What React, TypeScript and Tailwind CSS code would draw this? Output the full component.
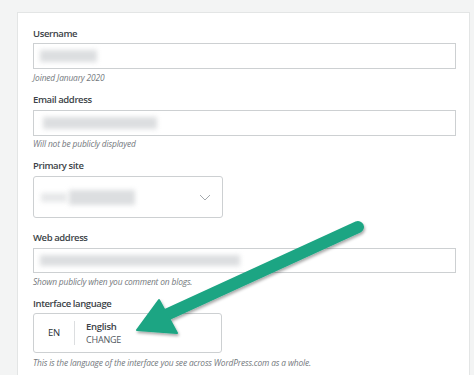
import React from "react"

const font = { fontFamily: '"Open Sans", "Noto Sans", Arial, sans-serif' }

function Label({ children, className = "" }: { children: React.ReactNode; className?: string }) {
  return <div className={`text-[9.5px] leading-[14px] font-semibold tracking-[-0.4px] text-[#3c4348] ${className}`}>{children}</div>
}

function Help({ children, className = "" }: { children: React.ReactNode; className?: string }) {
  return <div className={`text-[8.4px] leading-[12px] italic tracking-[-0.15px] text-[#73787d] ${className}`}>{children}</div>
}

function Blur({ className }: { className: string }) {
  return <div className={`bg-[#dcdee0] blur-[2.5px] ${className}`} />
}

function Arrow() {
  return (
    <svg className="absolute left-0 top-0 pointer-events-none" width="474" height="375" viewBox="0 0 474 375">
      <defs>
        <filter id="sh" x="-20%" y="-20%" width="140%" height="140%">
          <feDropShadow dx="1" dy="2" stdDeviation="1.5" floodColor="#000" floodOpacity="0.35" />
        </filter>
      </defs>
      <g filter="url(#sh)" fill="#1ba583" stroke="#1ba583">
        <line x1="358" y1="227" x2="166" y2="315" strokeWidth="12" strokeLinecap="round" />
        <polygon points="137,330 159,300 177,333" strokeWidth="2" strokeLinejoin="round" />
      </g>
    </svg>
  )
}

export default function App() {
  return (
    <div className="relative w-[474px] h-[375px] overflow-hidden bg-[#f3f4f4] pt-[12px] pl-[17px] pr-[4px]" style={font}>
      <div className="bg-white border border-[#e3e5e5] h-[400px] pl-[15px] pr-[13px] pt-[14px]">
        <Label>Username</Label>
        <div className="mt-[2px] h-[26px] border border-[#cdd0d2] flex items-center pl-[6px]">
          <Blur className="w-[57px] h-[12px]" />
        </div>
        <Help className="mt-[3px]">Joined January 2020</Help>

        <Label className="mt-[9px]">Email address</Label>
        <div className="mt-[3px] h-[26px] border border-[#cdd0d2] flex items-center pl-[9px]">
          <Blur className="w-[114px] h-[12px]" />
        </div>
        <Help className="mt-[2px]">Will not be publicly displayed</Help>

        <Label className="mt-[9px]">Primary site</Label>
        <div className="mt-[3px] w-[190px] h-[42px] border border-[#cdd0d2] rounded-[3px] flex items-center justify-between pl-[7px] pr-[11px]">
          <div className="flex items-center gap-[2px]">
            <Blur className="w-[26px] h-[9px] opacity-70" />
            <Blur className="w-[66px] h-[15px]" />
          </div>
          <svg width="12" height="7" viewBox="0 0 12 7" fill="none" stroke="#a4a9ad" strokeWidth="1">
            <path d="M1 1l5 5 5-5" />
          </svg>
        </div>

        <Label className="mt-[13px]">Web address</Label>
        <div className="mt-[3px] h-[25px] border border-[#cdd0d2] flex items-center pl-[6px]">
          <Blur className="w-[200px] h-[11px]" />
        </div>
        <Help className="mt-[3px]">Shown publicly when you comment on blogs.</Help>

        <Label className="mt-[9px]">Interface language</Label>
        <div className="mt-[2px] w-[189px] h-[40px] border border-[#cdd0d2] rounded-[3px] flex items-center">
          <div className="w-[40px] text-center text-[9.5px] tracking-[-0.2px] text-[#2c3338]">EN</div>
          <div className="w-px h-[24px] bg-[#dcdee0]" />
          <div className="pl-[11px] flex flex-col">
            <span className="text-[9.5px] leading-[13px] font-semibold tracking-[-0.3px] text-[#3c4348]">English</span>
            <span className="text-[9px] leading-[13px] tracking-[-0.2px] text-[#50575e]">CHANGE</span>
          </div>
        </div>
        <Help className="mt-[4px]">This is the language of the interface you see across WordPress.com as a whole.</Help>
      </div>
      <Arrow />
    </div>
  )
}
